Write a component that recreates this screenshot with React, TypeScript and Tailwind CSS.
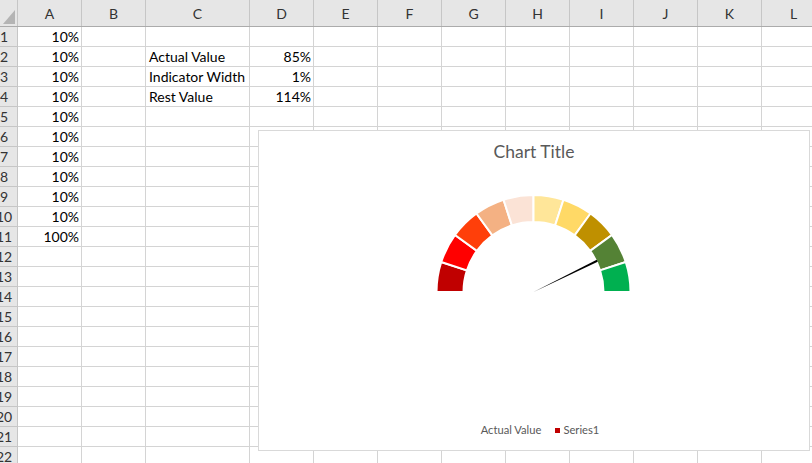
import React from 'react';

// Excel-style sheet with a floating gauge chart (doughnut + pie needle).

const COLS = [
  { key: 'A', w: 'w-[64px]' },
  { key: 'B', w: 'w-[64px]' },
  { key: 'C', w: 'w-[104px]' },
  { key: 'D', w: 'w-[64px]' },
  { key: 'E', w: 'w-[64px]' },
  { key: 'F', w: 'w-[64px]' },
  { key: 'G', w: 'w-[64px]' },
  { key: 'H', w: 'w-[64px]' },
  { key: 'I', w: 'w-[64px]' },
  { key: 'J', w: 'w-[64px]' },
  { key: 'K', w: 'w-[64px]' },
  { key: 'L', w: 'w-[64px]' },
];

type Cell = { text: string; align: 'left' | 'right' };

const DATA: Record<string, Cell> = {
  A11: { text: '100%', align: 'right' },
  C2: { text: 'Actual Value', align: 'left' },
  D2: { text: '85%', align: 'right' },
  C3: { text: 'Indicator Width', align: 'left' },
  D3: { text: '1%', align: 'right' },
  C4: { text: 'Rest Value', align: 'left' },
  D4: { text: '114%', align: 'right' },
};
for (let r = 1; r <= 10; r++) DATA[`A${r}`] = { text: '10%', align: 'right' };

const ROWS = Array.from({ length: 22 }, (_, i) => i + 1);

const SEGMENTS = [
  '#C00000', '#FF0000', '#FF3F0A', '#F4B183', '#FBE3D6',
  '#FFE699', '#FFD966', '#BF9000', '#548235', '#00B050',
];

const CX = 275.5;
const CY = 128;

function pt(r: number, deg: number) {
  const a = (deg * Math.PI) / 180;
  return `${(CX + r * Math.cos(a)).toFixed(2)} ${(CY - r * Math.sin(a)).toFixed(2)}`;
}

function sector(a1: number, a2: number, ro: number, ri: number) {
  return `M ${pt(ro, a1)} A ${ro} ${ro} 0 0 1 ${pt(ro, a2)} L ${pt(ri, a2)} A ${ri} ${ri} 0 0 0 ${pt(ri, a1)} Z`;
}

function Gauge() {
  const actual = 85;
  const width = 1;
  const a1 = 180 - (actual / 100) * 180;
  const a2 = 180 - ((actual + width) / 100) * 180;
  return (
    <svg width="552" height="140" viewBox="0 0 552 140" className="block">
      {SEGMENTS.map((c, i) => (
        <path
          key={c}
          d={sector(180 - i * 18, 180 - (i + 1) * 18, 97, 70)}
          fill={c}
          stroke="#fff"
          strokeWidth={2}
        />
      ))}
      <polygon points={`${CX} ${CY} ${pt(71, a1)} ${pt(71, a2)}`} fill="#000" />
    </svg>
  );
}

function Chart() {
  return (
    <div className="absolute left-[258px] top-[130px] w-[552px] h-[321px] border border-[#d9d9d9] bg-white flex flex-col items-center text-[#595959]">
      <div className="pt-[9px] text-[17.5px] leading-[24px]">Chart Title</div>
      <Gauge />
      <div className="mt-auto pb-[12px] flex items-center text-[11.2px] leading-[16px] pl-[12px]">
        <span>Actual Value</span>
        <span className="ml-[14px] w-[5px] h-[5px] bg-[#C00000]" />
        <span className="ml-[3px]">Series1</span>
      </div>
    </div>
  );
}

export default function App() {
  return (
    <div
      className="relative w-[812px] h-[463px] overflow-hidden bg-white text-black"
      style={{ fontFamily: 'Lato, "Noto Sans", sans-serif' }}
    >
      <div className="flex h-[27px] border-b border-[#ababab] bg-[#e6e6e6]">
        <div className="w-[18px] shrink-0 border-r border-[#c6c6c6] flex items-end justify-end pb-[2px] pr-[2px]">
          <svg width="12" height="14" viewBox="0 0 12 14">
            <polygon points="12 0 12 14 0 14" fill="#b4b4b4" />
          </svg>
        </div>
        {COLS.map(c => (
          <div
            key={c.key}
            className={`${c.w} shrink-0 border-r border-[#c6c6c6] flex items-center justify-center text-[14px] text-[#333]`}
          >
            {c.key}
          </div>
        ))}
      </div>
      {ROWS.map(r => (
        <div key={r} className="flex h-[20px]">
          <div className="w-[18px] shrink-0 overflow-hidden bg-[#e6e6e6] border-r border-b border-[#c6c6c6]">
            <div className="w-[24px] -ml-[8px] h-full flex items-center justify-center text-[14px] text-[#333] leading-none">
              {r}
            </div>
          </div>
          {COLS.map(c => {
            const cell = DATA[`${c.key}${r}`];
            return (
              <div
                key={c.key}
                className={`${c.w} shrink-0 border-r border-b border-[#d4d4d4] flex items-center px-[2px] text-[14px] leading-none whitespace-nowrap ${
                  cell?.align === 'right' ? 'justify-end' : 'justify-start pl-[3px]'
                }`}
              >
                {cell?.text}
              </div>
            );
          })}
        </div>
      ))}
      <Chart />
    </div>
  );
}
